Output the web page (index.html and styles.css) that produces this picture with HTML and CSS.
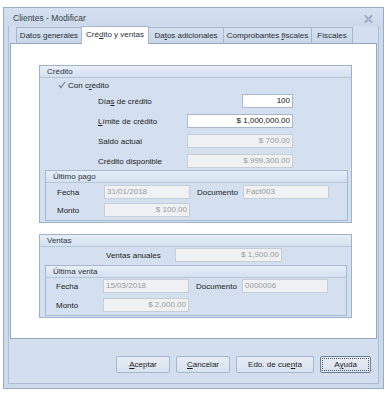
FILE: index.html
```html
<!DOCTYPE html>
<html lang="es">
<head>
<meta charset="utf-8">
<title>Clientes - Modificar</title>
<link rel="stylesheet" href="styles.css">
</head>
<body>
<div class="window">
  <div class="titlebar">
    <span class="title">Clientes - Modificar</span>
    <svg class="close" width="9" height="8" viewBox="0 0 9 8"><path d="M1 0.5 L8 7.5 M8 0.5 L1 7.5" stroke="#7b8ea8" stroke-width="1.6" fill="none"/><path d="M1 0.5 L8 7.5 M8 0.5 L1 7.5" stroke="#e8eef6" stroke-width="0.5" fill="none"/></svg>
  </div>
  <div class="client">
    <div class="tabs">
      <div class="tab t1">Datos generales</div>
      <div class="tab t2 active">Cré<u>d</u>ito y ventas</div>
      <div class="tab t3">Da<u>t</u>os adicionales</div>
      <div class="tab t4">Comprobantes <u>f</u>iscales</div>
      <div class="tab t5">Fiscales</div>
    </div>
    <div class="panel">
      <section class="group credit">
        <div class="ghead">Crédito</div>
        <div class="checkrow">
          <svg class="check" width="8" height="8" viewBox="0 0 8 8"><path d="M1 4.2 L3 6.5 L7 1" stroke="#6f7f95" stroke-width="1.2" fill="none"/></svg>
          <span>Con c<u>r</u>édito</span>
        </div>
        <div class="frows">
          <div class="frow">
            <span class="flabel">Día<u>s</u> de crédito</span>
            <span class="field short">100</span>
          </div>
          <div class="frow">
            <span class="flabel"><u>L</u>ímite de crédito</span>
            <span class="field">$ 1,000,000.00</span>
          </div>
          <div class="frow">
            <span class="flabel">Saldo actual</span>
            <span class="field off">$ 700.00</span>
          </div>
          <div class="frow">
            <span class="flabel">Crédito disponible</span>
            <span class="field off">$ 999,300.00</span>
          </div>
        </div>
        <section class="sub">
          <div class="ghead">Último pago</div>
          <div class="sgrid">
            <span class="slabel">Fecha</span>
            <span class="field off left">31/01/2018</span>
            <span class="slabel doc">Documento</span>
            <span class="field off left">Fact003</span>
            <span class="slabel">Monto</span>
            <span class="field off">$ 100.00</span>
          </div>
        </section>
      </section>
      <section class="group ventas">
        <div class="ghead">Ventas</div>
        <div class="vrow">
          <span class="vlabel">Ventas anuales</span>
          <span class="field off vfield">$ 1,900.00</span>
        </div>
        <section class="sub">
          <div class="ghead">Última venta</div>
          <div class="sgrid">
            <span class="slabel">Fecha</span>
            <span class="field off left">15/03/2018</span>
            <span class="slabel doc">Documento</span>
            <span class="field off left">0000006</span>
            <span class="slabel">Monto</span>
            <span class="field off">$ 2,000.00</span>
          </div>
        </section>
      </section>
    </div>
    <div class="buttons">
      <button class="btn w54"><u>A</u>ceptar</button>
      <button class="btn w54"><u>C</u>ancelar</button>
      <button class="btn w78">Edo. de cue<u>n</u>ta</button>
      <button class="btn w51 focus"><span>A<u>y</u>uda</span></button>
    </div>
  </div>
</div>
</body>
</html>
```
FILE: styles.css
```css
* { box-sizing: border-box; }
html, body { margin: 0; padding: 0; background: #ffffff; }
body {
  font-family: "Liberation Sans", Arial, sans-serif;
  font-size: 8px;
  color: #1c1c1c;
  width: 389px;
  height: 396px;
  overflow: hidden;
}
u { text-decoration: underline; text-underline-offset: 1px; }

.window {
  margin: 7px 0 0 3px;
  width: 381px;
  height: 382px;
  border: 1px solid #98acc6;
  background: #cddaeb;
  display: flex;
  flex-direction: column;
}
.titlebar {
  height: 18px;
  display: flex;
  align-items: center;
  padding: 2px 10px 0 9px;
  background: linear-gradient(#d6e2f1, #cbd9ea);
}
.title { font-size: 8.5px; color: #3a3f48; flex: 1; }
.close { display: block; margin-top: 1px; }

.client {
  flex: 1;
  margin: 0 4px 4px;
  border: 1px solid #aebfd5;
  border-top: none;
  background: #d3dfee;
  display: flex;
  flex-direction: column;
}
.tabs {
  display: flex;
  height: 17px;
  padding: 1px 0 0 7px;
  align-items: flex-end;
}
.tab {
  height: 16px;
  line-height: 15px;
  text-align: center;
  border: 1px solid #a6b8cf;
  border-bottom: none;
  margin-right: -1px;
  background: linear-gradient(#d6e2f0, #c8d6e8);
  color: #2b2f36;
  white-space: nowrap;
}
.t1 { width: 66px; }
.t2 { width: 68px; }
.t3 { width: 76px; }
.t4 { width: 89px; }
.t5 { width: 42px; }
.tab.active {
  height: 18px;
  line-height: 16px;
  margin-bottom: -1px;
  background: #ffffff;
  position: relative;
  z-index: 1;
}

.panel {
  margin: 0 1px;
  height: 296px;
  background: #ffffff;
  border: 1px solid #93a7c1;
  padding: 21px 0 0 28px;
}

.group {
  width: 313px;
  border: 1px solid #9fb3cd;
  background: #d4e0ef;
  padding-bottom: 1px;
}
.ghead {
  height: 12px;
  line-height: 11px;
  padding-left: 7px;
  border-bottom: 1px solid #b6c7dc;
  background: linear-gradient(#e6eef8, #d5e1f0);
  color: #2c3340;
}

.checkrow {
  height: 14px;
  display: flex;
  align-items: center;
  padding-left: 18px;
}
.check { margin-right: 2px; }

.frows {
  display: flex;
  flex-direction: column;
  gap: 6px;
  padding: 2px 58px 0 58px;
}
.frow {
  height: 14px;
  display: flex;
  align-items: center;
}
.flabel { flex: 1; }

.field {
  height: 14px;
  width: 106px;
  line-height: 12px;
  border: 1px solid #a8b9ce;
  background: #ffffff;
  text-align: right;
  padding: 0 2px;
  color: #111111;
  white-space: nowrap;
  overflow: hidden;
}
.field.short { width: 51px; }
.field.off {
  background: #eff1f3;
  border-color: #c6ced9;
  color: #9b9b9b;
}
.field.left { text-align: left; }

.sub {
  margin: 2px 3px 0 5px;
  border: 1px solid #a6b9d1;
  background: #d4e0ef;
  padding-bottom: 3px;
}
.sgrid {
  display: grid;
  grid-template-columns: 47px 86px 53px 86px;
  grid-auto-rows: 14px;
  row-gap: 4px;
  padding: 2px 0 0 11px;
  align-items: center;
}
.sgrid .field { width: 86px; }
.slabel { white-space: nowrap; }
.slabel.doc { padding-left: 7px; }

.ventas { margin-top: 11px; }
.vrow {
  height: 14px;
  margin-top: 1px;
  display: flex;
  align-items: center;
  padding-left: 66px;
}
.vlabel { width: 69px; }
.vfield { width: 107px; }
.ventas .sub { margin-top: 3px; margin-right: 4px; }
.ventas .sgrid { padding-top: 1px; row-gap: 5px; padding-left: 10px; }

.buttons {
  display: flex;
  justify-content: flex-end;
  gap: 6px;
  padding: 17px 7px 0 0;
}
.btn {
  height: 17px;
  font: inherit;
  color: #1c1c1c;
  border: 1px solid #a9b8cc;
  border-radius: 2px;
  background: linear-gradient(#e6edf6, #d8e2ef);
  padding: 0;
  display: flex;
  align-items: center;
  justify-content: center;
}
.w54 { width: 54px; }
.w78 { width: 78px; }
.w51 { width: 51px; }
.btn.focus {
  border-color: #6f8199;
  padding: 1px;
}
.btn.focus span {
  flex: 1;
  align-self: stretch;
  display: flex;
  align-items: center;
  justify-content: center;
  border: 1px dotted #555c66;
}
```
